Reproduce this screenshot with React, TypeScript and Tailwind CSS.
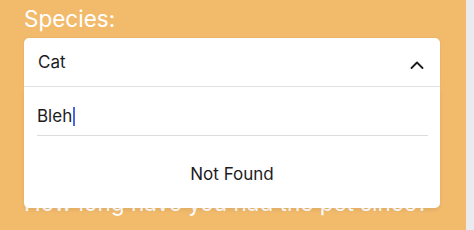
import React from "react";

export default function App() {
  return (
    <div
      className="flex w-[474px] h-[230px] overflow-hidden bg-[#f2bb6c]"
      style={{ fontFamily: "Inter, 'Liberation Sans', sans-serif" }}
    >
      <div className="min-w-0 flex-1 pl-[24px] pr-[26px]">
        <div className="pt-[4px] text-[22.5px] leading-[29px] text-white">Species:</div>
        <div className="relative z-10 mt-[5px]">
          <div className="flex h-[49px] items-center justify-between rounded-t-[5px] border-b border-[#e2e2e4] bg-white pl-[14px] pr-[16px] shadow-[0_0_3px_rgba(0,0,0,0.08)]">
            <span className="mt-[2px] text-[17px] text-[#1c1c1e]">Cat</span>
            <svg width="14" height="8" viewBox="0 0 14 8" className="mt-[6px]">
              <polyline points="1.5,7 7,1.5 12.5,7" fill="none" stroke="#1c1c1e" strokeWidth="1.8" strokeLinecap="round" strokeLinejoin="round" />
            </svg>
          </div>
          <div className="absolute left-0 right-0 top-full flex h-[121px] flex-col rounded-b-[5px] bg-white shadow-[0_2px_4px_rgba(0,0,0,0.08)]">
            <div className="ml-[13px] mr-[12px] flex h-[49px] items-center border-b border-[#dcdcde] pt-[11px]">
              <span className="text-[17px] text-[#1c1c1e]">Bleh</span>
              <span className="ml-[1px] inline-block h-[19px] w-[2px] bg-[#4c66e6]" />
            </div>
            <div className="flex flex-1 items-center justify-center pt-[5px] text-[17px] text-[#1c1c1e]">Not Found</div>
          </div>
        </div>
        <div className="mt-[101px] whitespace-nowrap text-[22.5px] leading-[29px] text-white">
          How long have you had the pet since?
        </div>
      </div>
      <div className="w-[8px] shrink-0 bg-[#ebebef]" />
    </div>
  );
}
